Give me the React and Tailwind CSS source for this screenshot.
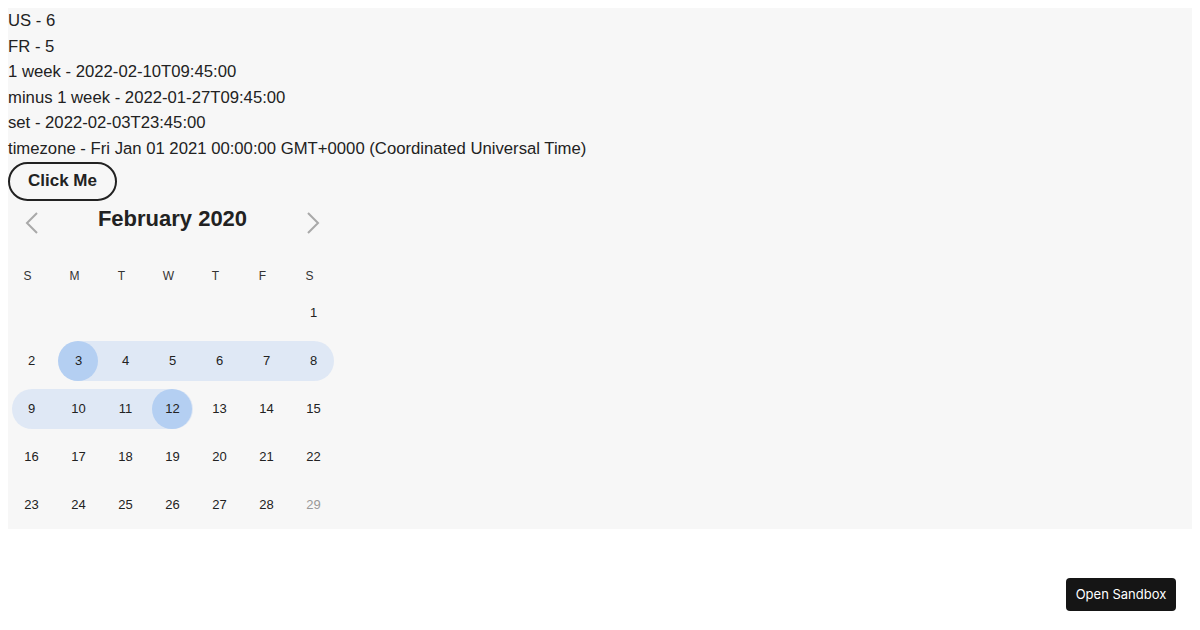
import React from "react";

const Chev = ({ dir }) => (
  <svg width="14" height="22" viewBox="0 0 14 22" fill="none">
    {dir === "left" ? (
      <path d="M12 1 L2 11 L12 21" stroke="#a9a9a9" strokeWidth="2" />
    ) : (
      <path d="M2 1 L12 11 L2 21" stroke="#a9a9a9" strokeWidth="2" />
    )}
  </svg>
);

const weeks = [
  [null, null, null, null, null, null, 1],
  [2, 3, 4, 5, 6, 7, 8],
  [9, 10, 11, 12, 13, 14, 15],
  [16, 17, 18, 19, 20, 21, 22],
  [23, 24, 25, 26, 27, 28, 29],
];

function DayCell({ d, col }) {
  if (d === null) return <div className="h-12 w-[47px]" />;
  const inRange = d >= 3 && d <= 12;
  const isEdge = d === 3 || d === 12;
  const isStart = d === 3 || (inRange && col === 0);
  const isEnd = d === 12 || (inRange && col === 6);
  let bar = null;
  if (inRange) {
    if (isStart && isEnd) bar = "left-[3.5px] right-[3.5px] rounded-full";
    else if (isStart) bar = "left-[3.5px] right-0 rounded-l-full";
    else if (isEnd) bar = "left-0 right-[3.5px] rounded-r-full";
    else bar = "left-0 right-0";
  }
  return (
    <div className="relative h-12 w-[47px] flex items-center justify-center">
      {bar && <div className={`absolute top-1 bottom-1 bg-[#dfe8f5] ${bar}`} />}
      {isEdge && <div className="absolute top-1 left-[3px] h-10 w-10 rounded-full bg-[#b4cff2]" />}
      <span className={`relative text-[13px] ${d === 29 ? "text-[#999]" : "text-[#222]"}`}>{d}</span>
    </div>
  );
}

export default function App() {
  return (
    <div className="min-h-[630px] bg-white p-2" style={{ fontFamily: '"Liberation Sans", Arial, sans-serif' }}>
      <div className="bg-[#f7f7f7] text-[#222]">
        <div className="text-[16.7px] leading-[25.6px]">
          <div>US - 6</div>
          <div>FR - 5</div>
          <div>1 week - 2022-02-10T09:45:00</div>
          <div>minus 1 week - 2022-01-27T09:45:00</div>
          <div>set - 2022-02-03T23:45:00</div>
          <div>timezone - Fri Jan 01 2021 00:00:00 GMT+0000 (Coordinated Universal Time)</div>
        </div>
        <button className="h-[39px] w-[109px] rounded-full border-2 border-[#222] text-[17px] font-bold text-[#222] bg-transparent">
          Click Me
        </button>
        <div className="w-[329px]">
          <div className="flex items-center justify-between h-[35px] pl-[17px] pr-[17px]">
            <div className="mt-[10px]"><Chev dir="left" /></div>
            <div className="text-[22px] font-bold text-[#222]">February 2020</div>
            <div className="mt-[10px]"><Chev dir="right" /></div>
          </div>
          <div className="flex h-[53px] items-end pb-[3px]">
            {["S", "M", "T", "W", "T", "F", "S"].map((l, i) => (
              <div key={i} className="w-[47px] pr-2 text-center text-[12px] text-[#333] leading-[20px]">
                {l}
              </div>
            ))}
          </div>
          <div>
            {weeks.map((w, i) => (
              <div key={i} className="flex">
                {w.map((d, j) => (
                  <DayCell key={j} d={d} col={j} />
                ))}
              </div>
            ))}
          </div>
        </div>
      </div>
      <button
        className="fixed right-[24px] bottom-[19px] h-[33px] w-[110px] rounded-[4px] bg-[#151515] text-white text-[13px]"
        style={{ fontFamily: 'Inter, "Liberation Sans", sans-serif' }}
      >
        Open Sandbox
      </button>
    </div>
  );
}
